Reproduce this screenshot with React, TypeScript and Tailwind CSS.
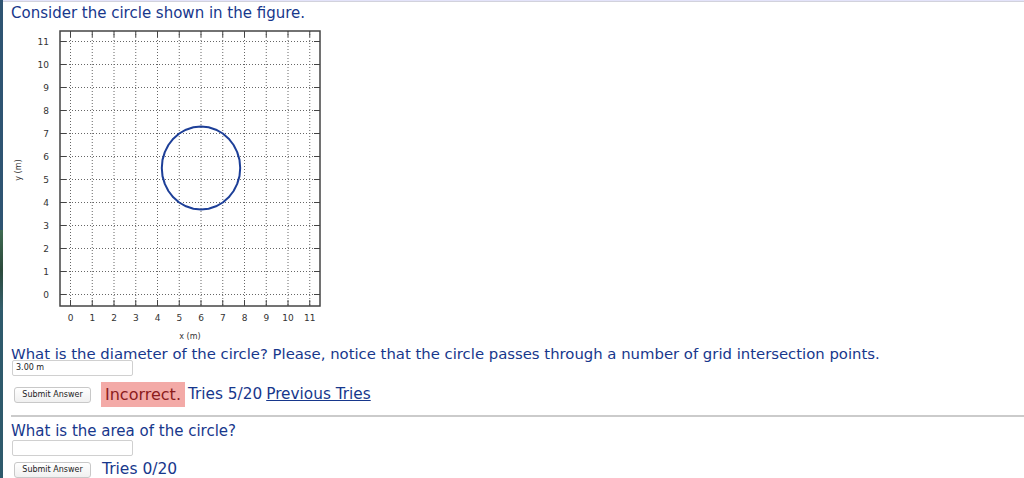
import React from 'react'

const X0 = 70.5
const DX = 21.75
const Y0 = 296.5
const DY = 23
const px = (v: number) => X0 + v * DX
const py = (v: number) => Y0 - v * DY
const ticks = Array.from({ length: 12 }, (_, i) => i)

function circlePoints() {
  const r = Math.sqrt(3.25)
  const pts: string[] = []
  for (let i = 0; i <= 32; i++) {
    const a = (i / 32) * Math.PI * 2
    pts.push(`${px(6 + r * Math.cos(a)).toFixed(1)},${py(5.5 + r * Math.sin(a)).toFixed(1)}`)
  }
  return pts.join(' ')
}

function Plot() {
  const left = 60
  const right = 320
  const top = 33
  const bottom = 308
  return (
    <svg width={330} height={322} viewBox="0 24 330 322" className="-ml-[11px] mt-[2px] block">
      {/* dotted grid */}
      {ticks.map((i) => (
        <g key={i}>
          <line x1={px(i)} x2={px(i)} y1={top} y2={bottom} stroke="#666" strokeWidth={1} strokeDasharray="1 2" />
          <line x1={left} x2={right} y1={py(i)} y2={py(i)} stroke="#666" strokeWidth={1} strokeDasharray="1 2" />
        </g>
      ))}
      {/* tick marks */}
      {ticks.map((i) => (
        <g key={'t' + i} stroke="#444" strokeWidth={1}>
          <line x1={px(i)} x2={px(i)} y1={top} y2={top + 6} />
          <line x1={px(i)} x2={px(i)} y1={bottom} y2={bottom - 6} />
          <line x1={left} x2={left + 6} y1={py(i)} y2={py(i)} />
          <line x1={right} x2={right - 6} y1={py(i)} y2={py(i)} />
        </g>
      ))}
      <rect x={left} y={top} width={right - left} height={bottom - top} fill="none" stroke="#444" strokeWidth={1.5} />
      <polyline points={circlePoints()} fill="none" stroke="#1d3f98" strokeWidth={2} strokeLinejoin="round" />
      {/* labels */}
      <g fill="#333" fontSize={9} fontFamily="'DejaVu Sans', Verdana, sans-serif">
        {ticks.map((i) => (
          <text key={'y' + i} x={49} y={py(i) + 3} textAnchor="end">
            {i}
          </text>
        ))}
        {ticks.map((i) => (
          <text key={'x' + i} x={px(i)} y={323} textAnchor="middle">
            {i}
          </text>
        ))}
        <text x={190} y={341} textAnchor="middle" fontSize={8}>
          x (m)
        </text>
        <text x={21} y={172} textAnchor="middle" fontSize={8} transform="rotate(-90 21 172)">
          y (m)
        </text>
      </g>
    </svg>
  )
}

function SubmitButton() {
  return (
    <button className="ml-[3px] flex h-4 w-[77px] items-center justify-center rounded-[3px] border border-[#c8c8c8] bg-gradient-to-b from-white to-[#f0f0f0] text-[8px] text-[#222]">
      Submit Answer
    </button>
  )
}

export default function App() {
  return (
    <div className="flex h-[478px] w-[1024px] overflow-hidden bg-white font-['DejaVu_Sans',Verdana,sans-serif] text-[#17378c]">
      <div className="flex w-[3px] flex-col">
        <div className="h-[230px] bg-[#2f5472]" />
        <div className="h-[80px] bg-gradient-to-b from-[#3f6b52] via-[#2c4a3c] to-[#355f6e]" />
        <div className="flex-1 bg-[#2e5a6c]" />
      </div>
      <div className="flex flex-1 flex-col">
        <div className="h-[4px] bg-[#e3e3fa]" />
        <div className="h-[2px] bg-[#d2d2dc]" />
        <div className="flex flex-col pl-[8px]">
          <p className="h-[18px] pt-[2px] text-[15px] leading-[18px]">Consider the circle shown in the figure.</p>
          <Plot />
          <p className="h-[16px] whitespace-nowrap pt-[2px] text-[14.85px] leading-[17px]">
            What is the diameter of the circle? Please, notice that the circle passes through a number of grid
            intersection points.
          </p>
          <div className="ml-px flex h-4 w-[121px] items-center rounded-[2px] border border-[#d0d0d0] px-[3px] text-[8px] text-[#222]">
            3.00 m
          </div>
          <div className="mt-[6px] flex h-[25px] items-center">
            <SubmitButton />
            <span className="ml-[10px] flex h-[25px] items-center bg-[#f3aaa7] px-[4px] text-[16px] text-[#8c1c1c]">
              Incorrect.
            </span>
            <span className="ml-[3px] text-[15.3px]">Tries 5/20</span>
            <span className="ml-[4px] text-[15.3px] underline">Previous Tries</span>
          </div>
          <div className="mt-[8px] h-[2px] bg-[#cbcbcb]" />
          <p className="mt-[5px] h-[18px] text-[15px] leading-[18px]">What is the area of the circle?</p>
          <div className="ml-px h-4 w-[121px] rounded-[2px] border border-[#d0d0d0]" />
          <div className="mt-[5px] flex h-[17px] items-center">
            <SubmitButton />
            <span className="ml-[11px] text-[15.5px]">Tries 0/20</span>
          </div>
        </div>
      </div>
    </div>
  )
}
